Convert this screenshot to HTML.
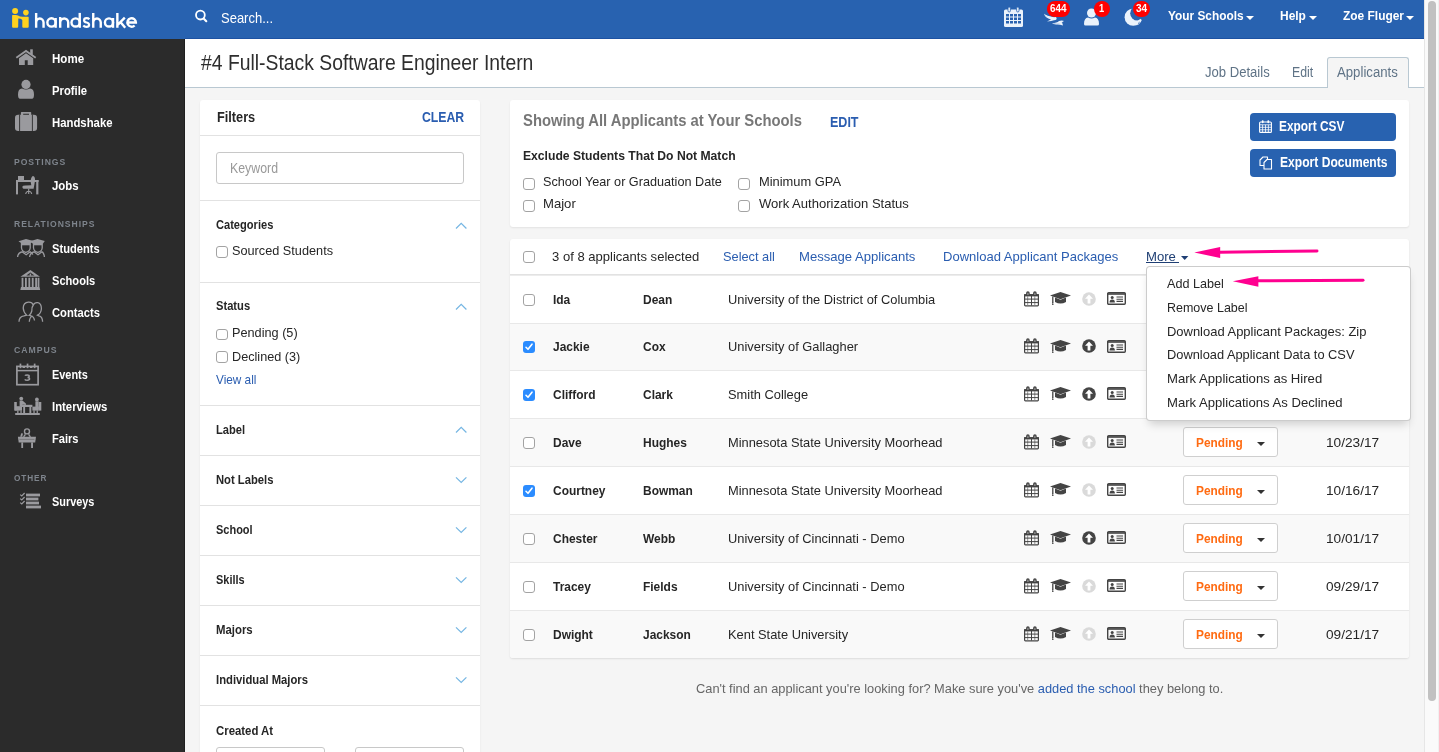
<!DOCTYPE html>
<html><head><meta charset="utf-8"><style>
html,body{margin:0;padding:0;}
body{width:1439px;height:752px;overflow:hidden;background:#f5f5f5;position:relative;font-family:"Liberation Sans",sans-serif;}
.a{position:absolute;}
.t{position:absolute;line-height:1;white-space:nowrap;transform-origin:0 0;}
</style></head><body>
<div class="a" style="left:1424px;top:0px;width:15px;height:752px;background:#fafafa;border-left:1px solid #e6e6e6;border-right:1px solid #f0f0f0;box-sizing:border-box;"></div>
<div class="a" style="left:1428px;top:1px;width:8px;height:700px;background:#c1c1c1;border-radius:4px;"></div>
<div class="a" style="left:185px;top:39px;width:1239px;height:48px;background:#fff;"></div>
<div class="a" style="left:185px;top:87px;width:1239px;height:1px;background:#b9c8d2;"></div>
<div class="a" style="left:0px;top:0px;width:1424px;height:39px;background:#2862b0;"></div>
<div class="a" style="left:185px;top:38px;width:1239px;height:1px;background:#1d52a3;"></div>
<div class="a" style="left:0px;top:39px;width:185px;height:713px;background:#2b2b2b;"></div>
<div class="a" style="left:184px;top:39px;width:1px;height:713px;background:#1f1f1f;"></div>
<svg class="a" style="left:10px;top:6px;" width="22" height="24" viewBox="0 0 22 24"><g fill="#ffd21f">
<circle cx="5.1" cy="4.9" r="3"/><circle cx="15.9" cy="6.6" r="2.8"/>
<path d="M2.1 9.5 Q2.1 9 2.6 9 L6 9 Q8 9.3 10 10.6 L12.8 10.8 L18.2 10.8 L18.7 11.3 L18.7 20.8 Q18.7 21.8 17.7 21.8 L13.3 21.8 Q12.3 21.8 12.3 20.8 L12.3 14 Q10.5 12.3 8.3 12.6 L8.2 20.8 Q8.2 21.8 7.2 21.8 L3.1 21.8 Q2.1 21.8 2.1 20.8 Z"/>
</g></svg>
<svg class="a" style="left:0px;top:0px;" width="140" height="32" viewBox="0 0 140 32"><g fill="none" stroke="#fff" stroke-width="2.4">
<path d="M36.15 12.9 V27.8 M36.15 22.6 A3.7 4.1 0 0 1 43.55 22.6 V27.8"/>
<circle cx="51.5" cy="22.45" r="4.15"/><path d="M55.65 18 V27.8"/>
<path d="M60.2 17.1 V27.8 M60.2 22.6 A4 4.1 0 0 1 68.2 22.6 V27.8"/>
<circle cx="75.6" cy="22.45" r="4.1"/><path d="M79.75 12.9 V27.8"/>
<path d="M89.4 19.3 Q88.4 18.2 86.5 18.2 Q84.1 18.2 84.1 20.2 Q84.1 22.1 86.6 22.5 Q89.1 22.9 89.1 24.9 Q89.1 26.8 86.4 26.8 Q84.4 26.8 83.3 25.6" stroke-width="2.2"/>
<path d="M93.25 12.9 V27.8 M93.25 22.6 A3.75 4.1 0 0 1 100.75 22.6 V27.8"/>
<circle cx="109" cy="22.45" r="4.05"/><path d="M113 18 V27.8"/>
<path d="M117.35 12.9 V27.8 M117.9 24.6 L124.8 17.6 M120.4 22.1 L125.2 27.8"/>
<path d="M127.4 22.45 H135.9 A4.25 4.25 0 1 0 134.6 25.5"/>
</g></svg>
<svg class="a" style="left:194px;top:9px;" width="15" height="15" viewBox="0 0 15 15"><circle cx="6.4" cy="6.1" r="4.4" fill="none" stroke="#fff" stroke-width="1.8"/><path d="M9.6 9.4 L12.3 12.2" stroke="#fff" stroke-width="2.1" stroke-linecap="round"/></svg>
<div class="t " style="left:221.00px;top:10.30px;font-size:15px;color:#fff;transform:scaleX(0.8662);">Search...</div>
<div class="t " style="left:1168.40px;top:8.70px;font-size:13px;color:#fff;font-weight:bold;transform:scaleX(0.9128);">Your Schools</div>
<svg class="a" style="left:1245.5px;top:15.5px;" width="8" height="4" viewBox="0 0 8 4"><path d="M0 0 L8 0 L4.0 4 Z" fill="#fff"/></svg>
<div class="t " style="left:1280.40px;top:8.70px;font-size:13px;color:#fff;font-weight:bold;transform:scaleX(0.9194);">Help</div>
<svg class="a" style="left:1308.7px;top:15.5px;" width="8" height="4" viewBox="0 0 8 4"><path d="M0 0 L8 0 L4.0 4 Z" fill="#fff"/></svg>
<div class="t " style="left:1343.00px;top:8.70px;font-size:13px;color:#fff;font-weight:bold;transform:scaleX(0.9180);">Zoe Fluger</div>
<svg class="a" style="left:1405.6px;top:15.5px;" width="8" height="4" viewBox="0 0 8 4"><path d="M0 0 L8 0 L4.0 4 Z" fill="#fff"/></svg>
<svg class="a" style="left:1004px;top:7px;" width="19" height="20" viewBox="0 0 19 20"><g fill="#eaf2fb">
<rect x="0" y="2.5" width="19" height="17.5" rx="1.5"/>
</g>
<rect x="4" y="0" width="2.4" height="5" rx="1.2" fill="#eaf2fb" stroke="#2862b0" stroke-width="0.8"/>
<rect x="12.6" y="0" width="2.4" height="5" rx="1.2" fill="#eaf2fb" stroke="#2862b0" stroke-width="0.8"/>
<g fill="#2862b0">
<rect x="2" y="7" width="3" height="2.5"/><rect x="6" y="7" width="3" height="2.5"/><rect x="10" y="7" width="3" height="2.5"/><rect x="14" y="7" width="3" height="2.5"/>
<rect x="2" y="10.5" width="3" height="2.5"/><rect x="6" y="10.5" width="3" height="2.5"/><rect x="10" y="10.5" width="3" height="2.5"/><rect x="14" y="10.5" width="3" height="2.5"/>
<rect x="2" y="14" width="3" height="2.5"/><rect x="6" y="14" width="3" height="2.5"/><rect x="10" y="14" width="3" height="2.5"/><rect x="14" y="14" width="3" height="2.5"/>
</g></svg>
<svg class="a" style="left:1043px;top:10px;" width="22" height="16" viewBox="0 0 22 16"><g fill="#eaf2fb">
<path d="M1 4 Q5 9 12 8.5 L10 7 Q4 6 1 4 Z"/>
<path d="M1 3.5 Q2 8 8 9.5 L4 11.5 Q9 11 11 10.3 Q15 10 13 7 L8 7.5 Q3 7 1 3.5Z"/>
<path d="M21 11 Q17 15 9 13 Q14 13 16 11 Q19 10 21 11Z"/>
<path d="M9 13 Q15 14.5 19 12 L20 15.5 Q16 14 13 14.5 Q10 14 9 13Z"/>
</g></svg>
<svg class="a" style="left:1084px;top:8px;" width="15" height="18" viewBox="0 0 15 18"><g fill="#eaf2fb"><circle cx="7.5" cy="5" r="4.5"/><path d="M0 16 Q0 10 4 9.5 Q7.5 11.5 11 9.5 Q15 10 15 16 Q15 17.5 13.5 17.5 L1.5 17.5 Q0 17.5 0 16Z"/></g></svg>
<svg class="a" style="left:1122px;top:6px;" width="22" height="22" viewBox="0 0 22 22"><defs><mask id="mm"><rect width="22" height="22" fill="#fff"/><circle cx="15.6" cy="7.2" r="7.4" fill="#000"/></mask></defs>
<circle cx="11.2" cy="11.2" r="8.6" fill="#eaf2fb" mask="url(#mm)"/>
<path d="M14.5 15.5 L18.6 12.8 L19.6 14.6 Q18 18.2 15.6 19.2 Z" fill="#eaf2fb"/><path d="M16 17.6 L17.6 15.2 L17.2 18 Z" fill="#2862b0"/></svg>
<div class="a" style="left:1046.8px;top:1.2px;width:23px;height:15.6px;background:#ff0000;border-radius:7.8px;"></div>
<div class="t " style="left:1050.20px;top:3.01px;font-size:10.5px;color:#fff;font-weight:bold;transform:scaleX(0.9418);">644</div>
<div class="a" style="left:1094px;top:1.2px;width:16px;height:15.8px;background:#ff0000;border-radius:7.9px;"></div>
<div class="t " style="left:1099.20px;top:3.01px;font-size:10.5px;color:#fff;font-weight:bold;transform:scaleX(0.8904);">1</div>
<div class="a" style="left:1133px;top:1.2px;width:17px;height:15.8px;background:#ff0000;border-radius:7.9px;"></div>
<div class="t " style="left:1135.80px;top:3.01px;font-size:10.5px;color:#fff;font-weight:bold;transform:scaleX(0.9589);">34</div>
<div class="t " style="left:51.90px;top:52.00px;font-size:13px;color:#fff;font-weight:bold;transform:scaleX(0.8887);">Home</div>
<div class="t " style="left:51.90px;top:83.50px;font-size:13px;color:#fff;font-weight:bold;transform:scaleX(0.8676);">Profile</div>
<div class="t " style="left:51.90px;top:115.70px;font-size:13px;color:#fff;font-weight:bold;transform:scaleX(0.8722);">Handshake</div>
<div class="t " style="left:51.90px;top:178.50px;font-size:13px;color:#fff;font-weight:bold;transform:scaleX(0.8799);">Jobs</div>
<div class="t " style="left:51.90px;top:242.00px;font-size:13px;color:#fff;font-weight:bold;transform:scaleX(0.8577);">Students</div>
<div class="t " style="left:51.90px;top:273.50px;font-size:13px;color:#fff;font-weight:bold;transform:scaleX(0.8543);">Schools</div>
<div class="t " style="left:51.90px;top:306.10px;font-size:13px;color:#fff;font-weight:bold;transform:scaleX(0.8612);">Contacts</div>
<div class="t " style="left:51.90px;top:368.00px;font-size:13px;color:#fff;font-weight:bold;transform:scaleX(0.8397);">Events</div>
<div class="t " style="left:51.90px;top:400.10px;font-size:13px;color:#fff;font-weight:bold;transform:scaleX(0.8713);">Interviews</div>
<div class="t " style="left:51.90px;top:432.00px;font-size:13px;color:#fff;font-weight:bold;transform:scaleX(0.8529);">Fairs</div>
<div class="t " style="left:51.90px;top:495.00px;font-size:13px;color:#fff;font-weight:bold;transform:scaleX(0.8381);">Surveys</div>
<div class="t " style="left:14.00px;top:157.78px;font-size:9px;color:#7e848c;font-weight:bold;letter-spacing:1px;transform:scaleX(0.9569);">POSTINGS</div>
<div class="t " style="left:14.00px;top:220.38px;font-size:9px;color:#7e848c;font-weight:bold;letter-spacing:1px;transform:scaleX(0.9533);">RELATIONSHIPS</div>
<div class="t " style="left:14.00px;top:346.38px;font-size:9px;color:#7e848c;font-weight:bold;letter-spacing:1px;transform:scaleX(0.9658);">CAMPUS</div>
<div class="t " style="left:14.00px;top:473.58px;font-size:9px;color:#7e848c;font-weight:bold;letter-spacing:1px;transform:scaleX(0.9127);">OTHER</div>
<div class="t " style="left:200.70px;top:51.72px;font-size:21.6px;color:#2e2e2e;transform:scaleX(0.8962);">#4 Full-Stack Software Engineer Intern</div>
<div class="a" style="left:1326.5px;top:57px;width:82px;height:31px;background:#f5f5f5;border:1px solid #b9c8d2;border-bottom:none;border-radius:3px 3px 0 0;box-sizing:border-box;"></div>
<div class="t " style="left:1204.70px;top:64.55px;font-size:14px;color:#5f7386;transform:scaleX(0.9342);">Job Details</div>
<div class="t " style="left:1291.80px;top:64.55px;font-size:14px;color:#5f7386;transform:scaleX(0.8788);">Edit</div>
<div class="t " style="left:1336.70px;top:65.15px;font-size:14px;color:#5f7386;transform:scaleX(0.9413);">Applicants</div>
<div class="a" style="left:200px;top:100px;width:280px;height:700px;background:#fff;border-radius:3px;box-shadow:0 1px 2px rgba(0,0,0,.08);"></div>
<div class="t " style="left:216.60px;top:109.85px;font-size:14px;color:#262626;font-weight:bold;transform:scaleX(0.9092);">Filters</div>
<div class="t " style="left:422.00px;top:110.15px;font-size:14px;color:#2a5db0;font-weight:bold;transform:scaleX(0.8751);">CLEAR</div>
<div class="a" style="left:200px;top:135px;width:280px;height:1px;background:#e2e2e2;"></div>
<div class="a" style="left:216px;top:152px;width:248px;height:32px;background:#fff;border:1px solid #c8c8c8;border-radius:3px;box-sizing:border-box;"></div>
<div class="t " style="left:229.50px;top:161.05px;font-size:14px;color:#999;transform:scaleX(0.8812);">Keyword</div>
<div class="a" style="left:200px;top:200px;width:280px;height:1px;background:#e2e2e2;"></div>
<div class="t " style="left:216.40px;top:218.84px;font-size:12px;color:#262626;font-weight:bold;transform:scaleX(0.9238);">Categories</div>
<svg class="a" style="left:454.5px;top:221.5px;" width="13" height="8" viewBox="0 0 13 8"><path d="M1 6.5 L6.2 1.3 L11.4 6.5" fill="none" stroke="#75b6e3" stroke-width="1.2"/></svg>
<div class="a" style="left:216.4px;top:246.3px;width:11.5px;height:11.5px;background:#fff;border:1px solid #a3a3a3;border-radius:3px;box-sizing:border-box;"></div>
<div class="t " style="left:231.50px;top:244.16px;font-size:13.4px;color:#262626;transform:scaleX(0.9490);">Sourced Students</div>
<div class="a" style="left:200px;top:282px;width:280px;height:1px;background:#e2e2e2;"></div>
<div class="t " style="left:216.40px;top:300.44px;font-size:12px;color:#262626;font-weight:bold;transform:scaleX(0.9298);">Status</div>
<svg class="a" style="left:454.5px;top:303px;" width="13" height="8" viewBox="0 0 13 8"><path d="M1 6.5 L6.2 1.3 L11.4 6.5" fill="none" stroke="#75b6e3" stroke-width="1.2"/></svg>
<div class="a" style="left:216.4px;top:328.5px;width:11.5px;height:11.5px;background:#fff;border:1px solid #a3a3a3;border-radius:3px;box-sizing:border-box;"></div>
<div class="t " style="left:231.50px;top:326.36px;font-size:13.4px;color:#262626;transform:scaleX(0.9483);">Pending (5)</div>
<div class="a" style="left:216.4px;top:351.2px;width:11.5px;height:11.5px;background:#fff;border:1px solid #a3a3a3;border-radius:3px;box-sizing:border-box;"></div>
<div class="t " style="left:231.50px;top:349.86px;font-size:13.4px;color:#262626;transform:scaleX(0.9454);">Declined (3)</div>
<div class="t " style="left:216.40px;top:373.00px;font-size:13px;color:#2a5db0;transform:scaleX(0.9066);">View all</div>
<div class="a" style="left:200px;top:405px;width:280px;height:1px;background:#e2e2e2;"></div>
<div class="t " style="left:216.40px;top:423.74px;font-size:12px;color:#262626;font-weight:bold;transform:scaleX(0.9285);">Label</div>
<svg class="a" style="left:454.5px;top:425.9px;" width="13" height="8" viewBox="0 0 13 8"><path d="M1 6.5 L6.2 1.3 L11.4 6.5" fill="none" stroke="#75b6e3" stroke-width="1.2"/></svg>
<div class="a" style="left:200px;top:455px;width:280px;height:1px;background:#e2e2e2;"></div>
<div class="t " style="left:216.40px;top:473.64px;font-size:12px;color:#262626;font-weight:bold;transform:scaleX(0.9357);">Not Labels</div>
<svg class="a" style="left:454.5px;top:476.3px;" width="13" height="8" viewBox="0 0 13 8"><path d="M1 1.3 L6.2 6.5 L11.4 1.3" fill="none" stroke="#75b6e3" stroke-width="1.2"/></svg>
<div class="a" style="left:200px;top:505px;width:280px;height:1px;background:#e2e2e2;"></div>
<div class="t " style="left:216.40px;top:523.54px;font-size:12px;color:#262626;font-weight:bold;transform:scaleX(0.9149);">School</div>
<svg class="a" style="left:454.5px;top:526.2px;" width="13" height="8" viewBox="0 0 13 8"><path d="M1 1.3 L6.2 6.5 L11.4 1.3" fill="none" stroke="#75b6e3" stroke-width="1.2"/></svg>
<div class="a" style="left:200px;top:555px;width:280px;height:1px;background:#e2e2e2;"></div>
<div class="t " style="left:216.40px;top:573.54px;font-size:12px;color:#262626;font-weight:bold;transform:scaleX(0.9122);">Skills</div>
<svg class="a" style="left:454.5px;top:576.2px;" width="13" height="8" viewBox="0 0 13 8"><path d="M1 1.3 L6.2 6.5 L11.4 1.3" fill="none" stroke="#75b6e3" stroke-width="1.2"/></svg>
<div class="a" style="left:200px;top:605px;width:280px;height:1px;background:#e2e2e2;"></div>
<div class="t " style="left:216.40px;top:623.54px;font-size:12px;color:#262626;font-weight:bold;transform:scaleX(0.9488);">Majors</div>
<svg class="a" style="left:454.5px;top:626.2px;" width="13" height="8" viewBox="0 0 13 8"><path d="M1 1.3 L6.2 6.5 L11.4 1.3" fill="none" stroke="#75b6e3" stroke-width="1.2"/></svg>
<div class="a" style="left:200px;top:655px;width:280px;height:1px;background:#e2e2e2;"></div>
<div class="t " style="left:216.40px;top:673.54px;font-size:12px;color:#262626;font-weight:bold;transform:scaleX(0.9386);">Individual Majors</div>
<svg class="a" style="left:454.5px;top:676.2px;" width="13" height="8" viewBox="0 0 13 8"><path d="M1 1.3 L6.2 6.5 L11.4 1.3" fill="none" stroke="#75b6e3" stroke-width="1.2"/></svg>
<div class="a" style="left:200px;top:705px;width:280px;height:1px;background:#e2e2e2;"></div>
<div class="t " style="left:216.40px;top:725.24px;font-size:12px;color:#262626;font-weight:bold;transform:scaleX(0.9479);">Created At</div>
<div class="a" style="left:216px;top:747px;width:109px;height:20px;background:#fff;border:1px solid #c8c8c8;border-radius:3px;box-sizing:border-box;"></div>
<div class="a" style="left:355px;top:747px;width:109px;height:20px;background:#fff;border:1px solid #c8c8c8;border-radius:3px;box-sizing:border-box;"></div>
<div class="a" style="left:510px;top:100px;width:899px;height:127px;background:#fff;border-radius:3px;box-shadow:0 1px 2px rgba(0,0,0,.08);"></div>
<div class="t " style="left:523.40px;top:112.86px;font-size:16px;color:#777;font-weight:bold;transform:scaleX(0.9255);">Showing All Applicants at Your Schools</div>
<div class="t " style="left:830.00px;top:115.15px;font-size:14px;color:#2a5db0;font-weight:bold;transform:scaleX(0.8937);">EDIT</div>
<div class="t " style="left:523.40px;top:150.24px;font-size:12px;color:#262626;font-weight:bold;transform:scaleX(1.0123);">Exclude Students That Do Not Match</div>
<div class="a" style="left:523.3px;top:178.2px;width:11.8px;height:11.8px;background:#fff;border:1px solid #a3a3a3;border-radius:3px;box-sizing:border-box;"></div>
<div class="t " style="left:543.30px;top:174.66px;font-size:13.4px;color:#262626;transform:scaleX(0.9455);">School Year or Graduation Date</div>
<div class="a" style="left:523.3px;top:200.4px;width:11.8px;height:11.8px;background:#fff;border:1px solid #a3a3a3;border-radius:3px;box-sizing:border-box;"></div>
<div class="t " style="left:543.30px;top:197.36px;font-size:13.4px;color:#262626;transform:scaleX(0.9789);">Major</div>
<div class="a" style="left:738.2px;top:178.2px;width:11.8px;height:11.8px;background:#fff;border:1px solid #a3a3a3;border-radius:3px;box-sizing:border-box;"></div>
<div class="t " style="left:759.00px;top:174.66px;font-size:13.4px;color:#262626;transform:scaleX(0.9616);">Minimum GPA</div>
<div class="a" style="left:738.2px;top:200.4px;width:11.8px;height:11.8px;background:#fff;border:1px solid #a3a3a3;border-radius:3px;box-sizing:border-box;"></div>
<div class="t " style="left:759.00px;top:197.36px;font-size:13.4px;color:#262626;transform:scaleX(0.9744);">Work Authorization Status</div>
<div class="a" style="left:1250px;top:113px;width:146px;height:28px;background:#2862b0;border-radius:4px;"></div>
<div class="a" style="left:1250px;top:149px;width:146px;height:28px;background:#2862b0;border-radius:4px;"></div>
<div class="t " style="left:1278.70px;top:119.45px;font-size:14px;color:#fff;font-weight:bold;transform:scaleX(0.8479);">Export CSV</div>
<div class="t " style="left:1279.50px;top:155.15px;font-size:14px;color:#fff;font-weight:bold;transform:scaleX(0.8637);">Export Documents</div>
<svg class="a" style="left:1259px;top:120px;" width="13" height="13" viewBox="0 0 13 13"><rect x="0.6" y="2" width="11.8" height="10.4" rx="1" fill="none" stroke="#fff" stroke-width="1.1"/>
<path d="M0.6 4.8 H12.4 M0.6 7.3 H12.4 M0.6 9.8 H12.4 M3.6 4.8 V12.4 M6.5 4.8 V12.4 M9.4 4.8 V12.4" stroke="#fff" stroke-width="0.8"/>
<rect x="2.8" y="0.2" width="1.8" height="3" rx=".8" fill="#fff"/><rect x="8.4" y="0.2" width="1.8" height="3" rx=".8" fill="#fff"/></svg>
<svg class="a" style="left:1259px;top:156px;" width="14" height="14" viewBox="0 0 14 14"><path d="M1 4 L4 1 H8.5 V9.5 H1 Z" fill="none" stroke="#fff" stroke-width="1.1" stroke-linejoin="round"/>
<path d="M5 6.5 L8 3.5 H12.5 V13 H5 Z" fill="#2862b0" stroke="#fff" stroke-width="1.1" stroke-linejoin="round"/></svg>
<div class="a" style="left:510px;top:239px;width:899px;height:419px;background:#fff;border-radius:3px;box-shadow:0 1px 2px rgba(0,0,0,.1);"></div>
<div class="a" style="left:523px;top:251px;width:12px;height:12px;background:#fff;border:1px solid #a3a3a3;border-radius:3px;box-sizing:border-box;"></div>
<div class="t " style="left:551.60px;top:249.66px;font-size:13.4px;color:#262626;transform:scaleX(0.9741);">3 of 8 applicants selected</div>
<div class="t " style="left:722.50px;top:250.00px;font-size:13px;color:#2a5db0;transform:scaleX(0.9839);">Select all</div>
<div class="t " style="left:799.00px;top:250.00px;font-size:13px;color:#2a5db0;transform:scaleX(1.0067);">Message Applicants</div>
<div class="t " style="left:943.30px;top:250.00px;font-size:13px;color:#2a5db0;transform:scaleX(1.0017);">Download Applicant Packages</div>
<div class="t " style="left:1146.10px;top:249.80px;font-size:13px;color:#1f3f74;transform:scaleX(1.0095);">More</div>
<div class="a" style="left:1146px;top:262px;width:33px;height:1px;background:#1f3f74;"></div>
<svg class="a" style="left:1181.4px;top:256px;" width="7.4" height="4" viewBox="0 0 7.4 4"><path d="M0 0 L7.4 0 L3.7 4 Z" fill="#1f3f74"/></svg>
<div class="a" style="left:510px;top:274px;width:899px;height:1px;background:#e2e2e2;"></div>
<div class="a" style="left:510px;top:275px;width:899px;height:1px;background:#ececec;"></div>
<div class="a" style="left:510px;top:276px;width:899px;height:47px;background:#fff;"></div>
<div class="a" style="left:510px;top:323px;width:899px;height:1px;background:#e8e8e8;"></div>
<div class="a" style="left:523px;top:293.7px;width:12px;height:12px;background:#fff;border:1px solid #a3a3a3;border-radius:3px;box-sizing:border-box;"></div>
<div class="t " style="left:553.00px;top:292.73px;font-size:13.2px;color:#262626;font-weight:bold;transform:scaleX(0.9061);">Ida</div>
<div class="t " style="left:642.60px;top:292.73px;font-size:13.2px;color:#262626;font-weight:bold;transform:scaleX(0.9061);">Dean</div>
<div class="t " style="left:728.20px;top:292.56px;font-size:13.4px;color:#262626;transform:scaleX(0.9604);">University of the District of Columbia</div>
<svg class="a" style="left:1024px;top:290.5px;" width="15" height="16" viewBox="0 0 15 16"><rect x="0.6" y="3.9" width="13.8" height="10.9" rx="0.8" fill="none" stroke="#444" stroke-width="1.2"/>
<rect x="0" y="3.2" width="15" height="2.2" fill="#444"/>
<rect x="2.1" y="0.3" width="3.6" height="4.5" rx="1.8" fill="#444"/><rect x="9.1" y="0.3" width="3.6" height="4.5" rx="1.8" fill="#444"/>
<rect x="3.3" y="1.8" width="1.2" height="2.2" fill="#999"/><rect x="10.3" y="1.8" width="1.2" height="2.2" fill="#999"/>
<path d="M3.7 5 V14.5 M10.8 5 V14.5" stroke="#888" stroke-width="0.9"/>
<path d="M7.5 5 V14.5 M0.6 8.1 H14.4 M0.6 11.6 H14.4" stroke="#444" stroke-width="1"/></svg>
<svg class="a" style="left:1050px;top:292.0px;" width="21" height="13" viewBox="0 0 21 13"><path d="M0 3.6 L10.5 0 L21 3.6 L10.5 7.2 Z" fill="#444"/>
<path d="M5 5.6 V10 Q10.5 13 16 10 V5.6 L10.5 7.8 Z" fill="#444"/>
<path d="M2.8 4.4 V11" stroke="#444" stroke-width="1.3"/><path d="M2 13 L2.8 9.5 L3.6 13Z" fill="#444"/></svg>
<svg class="a" style="left:1081.8px;top:291.5px;" width="14" height="14" viewBox="0 0 14 14"><circle cx="7" cy="7" r="6.8" fill="#dadada"/><path d="M7 2.6 L11 6.8 H8.4 V11.4 H5.6 V6.8 H3 Z" fill="#fff"/></svg>
<svg class="a" style="left:1106.5px;top:292.0px;" width="19" height="13" viewBox="0 0 19 13"><rect x="0.7" y="0.7" width="17.6" height="11.6" rx="1" fill="none" stroke="#444" stroke-width="1.4"/>
<path d="M0.7 2 H18.3" stroke="#444" stroke-width="1.6"/>
<circle cx="5.2" cy="5.6" r="1.5" fill="#444"/><path d="M2.5 10.4 Q2.5 7.4 5.2 7.4 Q7.9 7.4 7.9 10.4Z" fill="#444"/>
<path d="M9.5 5 H16 M9.5 7.2 H16 M9.5 9.4 H16" stroke="#444" stroke-width="1.1"/></svg>
<div class="a" style="left:510px;top:324px;width:899px;height:46px;background:#f9f9f9;"></div>
<div class="a" style="left:510px;top:370px;width:899px;height:1px;background:#e8e8e8;"></div>
<div class="a" style="left:523px;top:341.2px;width:12px;height:12px;background:#2b8cff;border-radius:3px;"></div>
<svg class="a" style="left:523px;top:341.2px;" width="12" height="12" viewBox="0 0 12 12"><path d="M3 6.3 L5 8.3 L9 3.2" fill="none" stroke="#fff" stroke-width="1.6" stroke-linecap="round" stroke-linejoin="round"/></svg>
<div class="t " style="left:553.00px;top:340.23px;font-size:13.2px;color:#262626;font-weight:bold;transform:scaleX(0.9061);">Jackie</div>
<div class="t " style="left:642.60px;top:340.23px;font-size:13.2px;color:#262626;font-weight:bold;transform:scaleX(0.9061);">Cox</div>
<div class="t " style="left:728.20px;top:340.06px;font-size:13.4px;color:#262626;transform:scaleX(0.9604);">University of Gallagher</div>
<svg class="a" style="left:1024px;top:338.0px;" width="15" height="16" viewBox="0 0 15 16"><rect x="0.6" y="3.9" width="13.8" height="10.9" rx="0.8" fill="none" stroke="#444" stroke-width="1.2"/>
<rect x="0" y="3.2" width="15" height="2.2" fill="#444"/>
<rect x="2.1" y="0.3" width="3.6" height="4.5" rx="1.8" fill="#444"/><rect x="9.1" y="0.3" width="3.6" height="4.5" rx="1.8" fill="#444"/>
<rect x="3.3" y="1.8" width="1.2" height="2.2" fill="#999"/><rect x="10.3" y="1.8" width="1.2" height="2.2" fill="#999"/>
<path d="M3.7 5 V14.5 M10.8 5 V14.5" stroke="#888" stroke-width="0.9"/>
<path d="M7.5 5 V14.5 M0.6 8.1 H14.4 M0.6 11.6 H14.4" stroke="#444" stroke-width="1"/></svg>
<svg class="a" style="left:1050px;top:339.5px;" width="21" height="13" viewBox="0 0 21 13"><path d="M0 3.6 L10.5 0 L21 3.6 L10.5 7.2 Z" fill="#444"/>
<path d="M5 5.6 V10 Q10.5 13 16 10 V5.6 L10.5 7.8 Z" fill="#444"/>
<path d="M2.8 4.4 V11" stroke="#444" stroke-width="1.3"/><path d="M2 13 L2.8 9.5 L3.6 13Z" fill="#444"/></svg>
<svg class="a" style="left:1081.8px;top:339.0px;" width="14" height="14" viewBox="0 0 14 14"><circle cx="7" cy="7" r="6.8" fill="#444"/><path d="M7 2.6 L11 6.8 H8.4 V11.4 H5.6 V6.8 H3 Z" fill="#fff"/></svg>
<svg class="a" style="left:1106.5px;top:339.5px;" width="19" height="13" viewBox="0 0 19 13"><rect x="0.7" y="0.7" width="17.6" height="11.6" rx="1" fill="none" stroke="#444" stroke-width="1.4"/>
<path d="M0.7 2 H18.3" stroke="#444" stroke-width="1.6"/>
<circle cx="5.2" cy="5.6" r="1.5" fill="#444"/><path d="M2.5 10.4 Q2.5 7.4 5.2 7.4 Q7.9 7.4 7.9 10.4Z" fill="#444"/>
<path d="M9.5 5 H16 M9.5 7.2 H16 M9.5 9.4 H16" stroke="#444" stroke-width="1.1"/></svg>
<div class="a" style="left:510px;top:371px;width:899px;height:47px;background:#fff;"></div>
<div class="a" style="left:510px;top:418px;width:899px;height:1px;background:#e8e8e8;"></div>
<div class="a" style="left:523px;top:388.7px;width:12px;height:12px;background:#2b8cff;border-radius:3px;"></div>
<svg class="a" style="left:523px;top:388.7px;" width="12" height="12" viewBox="0 0 12 12"><path d="M3 6.3 L5 8.3 L9 3.2" fill="none" stroke="#fff" stroke-width="1.6" stroke-linecap="round" stroke-linejoin="round"/></svg>
<div class="t " style="left:553.00px;top:387.73px;font-size:13.2px;color:#262626;font-weight:bold;transform:scaleX(0.9061);">Clifford</div>
<div class="t " style="left:642.60px;top:387.73px;font-size:13.2px;color:#262626;font-weight:bold;transform:scaleX(0.9061);">Clark</div>
<div class="t " style="left:728.20px;top:387.56px;font-size:13.4px;color:#262626;transform:scaleX(0.9604);">Smith College</div>
<svg class="a" style="left:1024px;top:385.5px;" width="15" height="16" viewBox="0 0 15 16"><rect x="0.6" y="3.9" width="13.8" height="10.9" rx="0.8" fill="none" stroke="#444" stroke-width="1.2"/>
<rect x="0" y="3.2" width="15" height="2.2" fill="#444"/>
<rect x="2.1" y="0.3" width="3.6" height="4.5" rx="1.8" fill="#444"/><rect x="9.1" y="0.3" width="3.6" height="4.5" rx="1.8" fill="#444"/>
<rect x="3.3" y="1.8" width="1.2" height="2.2" fill="#999"/><rect x="10.3" y="1.8" width="1.2" height="2.2" fill="#999"/>
<path d="M3.7 5 V14.5 M10.8 5 V14.5" stroke="#888" stroke-width="0.9"/>
<path d="M7.5 5 V14.5 M0.6 8.1 H14.4 M0.6 11.6 H14.4" stroke="#444" stroke-width="1"/></svg>
<svg class="a" style="left:1050px;top:387.0px;" width="21" height="13" viewBox="0 0 21 13"><path d="M0 3.6 L10.5 0 L21 3.6 L10.5 7.2 Z" fill="#444"/>
<path d="M5 5.6 V10 Q10.5 13 16 10 V5.6 L10.5 7.8 Z" fill="#444"/>
<path d="M2.8 4.4 V11" stroke="#444" stroke-width="1.3"/><path d="M2 13 L2.8 9.5 L3.6 13Z" fill="#444"/></svg>
<svg class="a" style="left:1081.8px;top:386.5px;" width="14" height="14" viewBox="0 0 14 14"><circle cx="7" cy="7" r="6.8" fill="#444"/><path d="M7 2.6 L11 6.8 H8.4 V11.4 H5.6 V6.8 H3 Z" fill="#fff"/></svg>
<svg class="a" style="left:1106.5px;top:387.0px;" width="19" height="13" viewBox="0 0 19 13"><rect x="0.7" y="0.7" width="17.6" height="11.6" rx="1" fill="none" stroke="#444" stroke-width="1.4"/>
<path d="M0.7 2 H18.3" stroke="#444" stroke-width="1.6"/>
<circle cx="5.2" cy="5.6" r="1.5" fill="#444"/><path d="M2.5 10.4 Q2.5 7.4 5.2 7.4 Q7.9 7.4 7.9 10.4Z" fill="#444"/>
<path d="M9.5 5 H16 M9.5 7.2 H16 M9.5 9.4 H16" stroke="#444" stroke-width="1.1"/></svg>
<div class="a" style="left:510px;top:419px;width:899px;height:47px;background:#f9f9f9;"></div>
<div class="a" style="left:510px;top:466px;width:899px;height:1px;background:#e8e8e8;"></div>
<div class="a" style="left:523px;top:436.7px;width:12px;height:12px;background:#fff;border:1px solid #a3a3a3;border-radius:3px;box-sizing:border-box;"></div>
<div class="t " style="left:553.00px;top:435.73px;font-size:13.2px;color:#262626;font-weight:bold;transform:scaleX(0.9061);">Dave</div>
<div class="t " style="left:642.60px;top:435.73px;font-size:13.2px;color:#262626;font-weight:bold;transform:scaleX(0.9061);">Hughes</div>
<div class="t " style="left:728.20px;top:435.56px;font-size:13.4px;color:#262626;transform:scaleX(0.9604);">Minnesota State University Moorhead</div>
<svg class="a" style="left:1024px;top:433.5px;" width="15" height="16" viewBox="0 0 15 16"><rect x="0.6" y="3.9" width="13.8" height="10.9" rx="0.8" fill="none" stroke="#444" stroke-width="1.2"/>
<rect x="0" y="3.2" width="15" height="2.2" fill="#444"/>
<rect x="2.1" y="0.3" width="3.6" height="4.5" rx="1.8" fill="#444"/><rect x="9.1" y="0.3" width="3.6" height="4.5" rx="1.8" fill="#444"/>
<rect x="3.3" y="1.8" width="1.2" height="2.2" fill="#999"/><rect x="10.3" y="1.8" width="1.2" height="2.2" fill="#999"/>
<path d="M3.7 5 V14.5 M10.8 5 V14.5" stroke="#888" stroke-width="0.9"/>
<path d="M7.5 5 V14.5 M0.6 8.1 H14.4 M0.6 11.6 H14.4" stroke="#444" stroke-width="1"/></svg>
<svg class="a" style="left:1050px;top:435.0px;" width="21" height="13" viewBox="0 0 21 13"><path d="M0 3.6 L10.5 0 L21 3.6 L10.5 7.2 Z" fill="#444"/>
<path d="M5 5.6 V10 Q10.5 13 16 10 V5.6 L10.5 7.8 Z" fill="#444"/>
<path d="M2.8 4.4 V11" stroke="#444" stroke-width="1.3"/><path d="M2 13 L2.8 9.5 L3.6 13Z" fill="#444"/></svg>
<svg class="a" style="left:1081.8px;top:434.5px;" width="14" height="14" viewBox="0 0 14 14"><circle cx="7" cy="7" r="6.8" fill="#dadada"/><path d="M7 2.6 L11 6.8 H8.4 V11.4 H5.6 V6.8 H3 Z" fill="#fff"/></svg>
<svg class="a" style="left:1106.5px;top:435.0px;" width="19" height="13" viewBox="0 0 19 13"><rect x="0.7" y="0.7" width="17.6" height="11.6" rx="1" fill="none" stroke="#444" stroke-width="1.4"/>
<path d="M0.7 2 H18.3" stroke="#444" stroke-width="1.6"/>
<circle cx="5.2" cy="5.6" r="1.5" fill="#444"/><path d="M2.5 10.4 Q2.5 7.4 5.2 7.4 Q7.9 7.4 7.9 10.4Z" fill="#444"/>
<path d="M9.5 5 H16 M9.5 7.2 H16 M9.5 9.4 H16" stroke="#444" stroke-width="1.1"/></svg>
<div class="a" style="left:1183px;top:427.4px;width:94.5px;height:29.2px;background:#fff;border:1px solid #cfcfcf;border-radius:3px;box-sizing:border-box;"></div>
<div class="t " style="left:1196.40px;top:435.77px;font-size:13.5px;color:#ff6b12;font-weight:bold;transform:scaleX(0.8789);">Pending</div>
<svg class="a" style="left:1257px;top:441.6px;" width="8" height="4" viewBox="0 0 8 4"><path d="M0 0 L8 0 L4.0 4 Z" fill="#333"/></svg>
<div class="t " style="left:1325.80px;top:435.86px;font-size:13.4px;color:#262626;transform:scaleX(1.0199);">10/23/17</div>
<div class="a" style="left:510px;top:467px;width:899px;height:47px;background:#fff;"></div>
<div class="a" style="left:510px;top:514px;width:899px;height:1px;background:#e8e8e8;"></div>
<div class="a" style="left:523px;top:484.7px;width:12px;height:12px;background:#2b8cff;border-radius:3px;"></div>
<svg class="a" style="left:523px;top:484.7px;" width="12" height="12" viewBox="0 0 12 12"><path d="M3 6.3 L5 8.3 L9 3.2" fill="none" stroke="#fff" stroke-width="1.6" stroke-linecap="round" stroke-linejoin="round"/></svg>
<div class="t " style="left:553.00px;top:483.73px;font-size:13.2px;color:#262626;font-weight:bold;transform:scaleX(0.9061);">Courtney</div>
<div class="t " style="left:642.60px;top:483.73px;font-size:13.2px;color:#262626;font-weight:bold;transform:scaleX(0.9061);">Bowman</div>
<div class="t " style="left:728.20px;top:483.56px;font-size:13.4px;color:#262626;transform:scaleX(0.9604);">Minnesota State University Moorhead</div>
<svg class="a" style="left:1024px;top:481.5px;" width="15" height="16" viewBox="0 0 15 16"><rect x="0.6" y="3.9" width="13.8" height="10.9" rx="0.8" fill="none" stroke="#444" stroke-width="1.2"/>
<rect x="0" y="3.2" width="15" height="2.2" fill="#444"/>
<rect x="2.1" y="0.3" width="3.6" height="4.5" rx="1.8" fill="#444"/><rect x="9.1" y="0.3" width="3.6" height="4.5" rx="1.8" fill="#444"/>
<rect x="3.3" y="1.8" width="1.2" height="2.2" fill="#999"/><rect x="10.3" y="1.8" width="1.2" height="2.2" fill="#999"/>
<path d="M3.7 5 V14.5 M10.8 5 V14.5" stroke="#888" stroke-width="0.9"/>
<path d="M7.5 5 V14.5 M0.6 8.1 H14.4 M0.6 11.6 H14.4" stroke="#444" stroke-width="1"/></svg>
<svg class="a" style="left:1050px;top:483.0px;" width="21" height="13" viewBox="0 0 21 13"><path d="M0 3.6 L10.5 0 L21 3.6 L10.5 7.2 Z" fill="#444"/>
<path d="M5 5.6 V10 Q10.5 13 16 10 V5.6 L10.5 7.8 Z" fill="#444"/>
<path d="M2.8 4.4 V11" stroke="#444" stroke-width="1.3"/><path d="M2 13 L2.8 9.5 L3.6 13Z" fill="#444"/></svg>
<svg class="a" style="left:1081.8px;top:482.5px;" width="14" height="14" viewBox="0 0 14 14"><circle cx="7" cy="7" r="6.8" fill="#dadada"/><path d="M7 2.6 L11 6.8 H8.4 V11.4 H5.6 V6.8 H3 Z" fill="#fff"/></svg>
<svg class="a" style="left:1106.5px;top:483.0px;" width="19" height="13" viewBox="0 0 19 13"><rect x="0.7" y="0.7" width="17.6" height="11.6" rx="1" fill="none" stroke="#444" stroke-width="1.4"/>
<path d="M0.7 2 H18.3" stroke="#444" stroke-width="1.6"/>
<circle cx="5.2" cy="5.6" r="1.5" fill="#444"/><path d="M2.5 10.4 Q2.5 7.4 5.2 7.4 Q7.9 7.4 7.9 10.4Z" fill="#444"/>
<path d="M9.5 5 H16 M9.5 7.2 H16 M9.5 9.4 H16" stroke="#444" stroke-width="1.1"/></svg>
<div class="a" style="left:1183px;top:475.4px;width:94.5px;height:29.2px;background:#fff;border:1px solid #cfcfcf;border-radius:3px;box-sizing:border-box;"></div>
<div class="t " style="left:1196.40px;top:483.77px;font-size:13.5px;color:#ff6b12;font-weight:bold;transform:scaleX(0.8789);">Pending</div>
<svg class="a" style="left:1257px;top:489.6px;" width="8" height="4" viewBox="0 0 8 4"><path d="M0 0 L8 0 L4.0 4 Z" fill="#333"/></svg>
<div class="t " style="left:1325.80px;top:483.86px;font-size:13.4px;color:#262626;transform:scaleX(1.0199);">10/16/17</div>
<div class="a" style="left:510px;top:515px;width:899px;height:47px;background:#f9f9f9;"></div>
<div class="a" style="left:510px;top:562px;width:899px;height:1px;background:#e8e8e8;"></div>
<div class="a" style="left:523px;top:532.7px;width:12px;height:12px;background:#fff;border:1px solid #a3a3a3;border-radius:3px;box-sizing:border-box;"></div>
<div class="t " style="left:553.00px;top:531.73px;font-size:13.2px;color:#262626;font-weight:bold;transform:scaleX(0.9061);">Chester</div>
<div class="t " style="left:642.60px;top:531.73px;font-size:13.2px;color:#262626;font-weight:bold;transform:scaleX(0.9061);">Webb</div>
<div class="t " style="left:728.20px;top:531.56px;font-size:13.4px;color:#262626;transform:scaleX(0.9604);">University of Cincinnati - Demo</div>
<svg class="a" style="left:1024px;top:529.5px;" width="15" height="16" viewBox="0 0 15 16"><rect x="0.6" y="3.9" width="13.8" height="10.9" rx="0.8" fill="none" stroke="#444" stroke-width="1.2"/>
<rect x="0" y="3.2" width="15" height="2.2" fill="#444"/>
<rect x="2.1" y="0.3" width="3.6" height="4.5" rx="1.8" fill="#444"/><rect x="9.1" y="0.3" width="3.6" height="4.5" rx="1.8" fill="#444"/>
<rect x="3.3" y="1.8" width="1.2" height="2.2" fill="#999"/><rect x="10.3" y="1.8" width="1.2" height="2.2" fill="#999"/>
<path d="M3.7 5 V14.5 M10.8 5 V14.5" stroke="#888" stroke-width="0.9"/>
<path d="M7.5 5 V14.5 M0.6 8.1 H14.4 M0.6 11.6 H14.4" stroke="#444" stroke-width="1"/></svg>
<svg class="a" style="left:1050px;top:531.0px;" width="21" height="13" viewBox="0 0 21 13"><path d="M0 3.6 L10.5 0 L21 3.6 L10.5 7.2 Z" fill="#444"/>
<path d="M5 5.6 V10 Q10.5 13 16 10 V5.6 L10.5 7.8 Z" fill="#444"/>
<path d="M2.8 4.4 V11" stroke="#444" stroke-width="1.3"/><path d="M2 13 L2.8 9.5 L3.6 13Z" fill="#444"/></svg>
<svg class="a" style="left:1081.8px;top:530.5px;" width="14" height="14" viewBox="0 0 14 14"><circle cx="7" cy="7" r="6.8" fill="#444"/><path d="M7 2.6 L11 6.8 H8.4 V11.4 H5.6 V6.8 H3 Z" fill="#fff"/></svg>
<svg class="a" style="left:1106.5px;top:531.0px;" width="19" height="13" viewBox="0 0 19 13"><rect x="0.7" y="0.7" width="17.6" height="11.6" rx="1" fill="none" stroke="#444" stroke-width="1.4"/>
<path d="M0.7 2 H18.3" stroke="#444" stroke-width="1.6"/>
<circle cx="5.2" cy="5.6" r="1.5" fill="#444"/><path d="M2.5 10.4 Q2.5 7.4 5.2 7.4 Q7.9 7.4 7.9 10.4Z" fill="#444"/>
<path d="M9.5 5 H16 M9.5 7.2 H16 M9.5 9.4 H16" stroke="#444" stroke-width="1.1"/></svg>
<div class="a" style="left:1183px;top:523.4px;width:94.5px;height:29.2px;background:#fff;border:1px solid #cfcfcf;border-radius:3px;box-sizing:border-box;"></div>
<div class="t " style="left:1196.40px;top:531.77px;font-size:13.5px;color:#ff6b12;font-weight:bold;transform:scaleX(0.8789);">Pending</div>
<svg class="a" style="left:1257px;top:537.6px;" width="8" height="4" viewBox="0 0 8 4"><path d="M0 0 L8 0 L4.0 4 Z" fill="#333"/></svg>
<div class="t " style="left:1325.80px;top:531.86px;font-size:13.4px;color:#262626;transform:scaleX(1.0199);">10/01/17</div>
<div class="a" style="left:510px;top:563px;width:899px;height:47px;background:#fff;"></div>
<div class="a" style="left:510px;top:610px;width:899px;height:1px;background:#e8e8e8;"></div>
<div class="a" style="left:523px;top:580.7px;width:12px;height:12px;background:#fff;border:1px solid #a3a3a3;border-radius:3px;box-sizing:border-box;"></div>
<div class="t " style="left:553.00px;top:579.73px;font-size:13.2px;color:#262626;font-weight:bold;transform:scaleX(0.9061);">Tracey</div>
<div class="t " style="left:642.60px;top:579.73px;font-size:13.2px;color:#262626;font-weight:bold;transform:scaleX(0.9061);">Fields</div>
<div class="t " style="left:728.20px;top:579.56px;font-size:13.4px;color:#262626;transform:scaleX(0.9604);">University of Cincinnati - Demo</div>
<svg class="a" style="left:1024px;top:577.5px;" width="15" height="16" viewBox="0 0 15 16"><rect x="0.6" y="3.9" width="13.8" height="10.9" rx="0.8" fill="none" stroke="#444" stroke-width="1.2"/>
<rect x="0" y="3.2" width="15" height="2.2" fill="#444"/>
<rect x="2.1" y="0.3" width="3.6" height="4.5" rx="1.8" fill="#444"/><rect x="9.1" y="0.3" width="3.6" height="4.5" rx="1.8" fill="#444"/>
<rect x="3.3" y="1.8" width="1.2" height="2.2" fill="#999"/><rect x="10.3" y="1.8" width="1.2" height="2.2" fill="#999"/>
<path d="M3.7 5 V14.5 M10.8 5 V14.5" stroke="#888" stroke-width="0.9"/>
<path d="M7.5 5 V14.5 M0.6 8.1 H14.4 M0.6 11.6 H14.4" stroke="#444" stroke-width="1"/></svg>
<svg class="a" style="left:1050px;top:579.0px;" width="21" height="13" viewBox="0 0 21 13"><path d="M0 3.6 L10.5 0 L21 3.6 L10.5 7.2 Z" fill="#444"/>
<path d="M5 5.6 V10 Q10.5 13 16 10 V5.6 L10.5 7.8 Z" fill="#444"/>
<path d="M2.8 4.4 V11" stroke="#444" stroke-width="1.3"/><path d="M2 13 L2.8 9.5 L3.6 13Z" fill="#444"/></svg>
<svg class="a" style="left:1081.8px;top:578.5px;" width="14" height="14" viewBox="0 0 14 14"><circle cx="7" cy="7" r="6.8" fill="#dadada"/><path d="M7 2.6 L11 6.8 H8.4 V11.4 H5.6 V6.8 H3 Z" fill="#fff"/></svg>
<svg class="a" style="left:1106.5px;top:579.0px;" width="19" height="13" viewBox="0 0 19 13"><rect x="0.7" y="0.7" width="17.6" height="11.6" rx="1" fill="none" stroke="#444" stroke-width="1.4"/>
<path d="M0.7 2 H18.3" stroke="#444" stroke-width="1.6"/>
<circle cx="5.2" cy="5.6" r="1.5" fill="#444"/><path d="M2.5 10.4 Q2.5 7.4 5.2 7.4 Q7.9 7.4 7.9 10.4Z" fill="#444"/>
<path d="M9.5 5 H16 M9.5 7.2 H16 M9.5 9.4 H16" stroke="#444" stroke-width="1.1"/></svg>
<div class="a" style="left:1183px;top:571.4px;width:94.5px;height:29.2px;background:#fff;border:1px solid #cfcfcf;border-radius:3px;box-sizing:border-box;"></div>
<div class="t " style="left:1196.40px;top:579.77px;font-size:13.5px;color:#ff6b12;font-weight:bold;transform:scaleX(0.8789);">Pending</div>
<svg class="a" style="left:1257px;top:585.6px;" width="8" height="4" viewBox="0 0 8 4"><path d="M0 0 L8 0 L4.0 4 Z" fill="#333"/></svg>
<div class="t " style="left:1325.80px;top:579.86px;font-size:13.4px;color:#262626;transform:scaleX(1.0199);">09/29/17</div>
<div class="a" style="left:510px;top:611px;width:899px;height:47px;background:#f9f9f9;border-radius:0 0 3px 3px;"></div>
<div class="a" style="left:523px;top:628.7px;width:12px;height:12px;background:#fff;border:1px solid #a3a3a3;border-radius:3px;box-sizing:border-box;"></div>
<div class="t " style="left:553.00px;top:627.73px;font-size:13.2px;color:#262626;font-weight:bold;transform:scaleX(0.9061);">Dwight</div>
<div class="t " style="left:642.60px;top:627.73px;font-size:13.2px;color:#262626;font-weight:bold;transform:scaleX(0.9061);">Jackson</div>
<div class="t " style="left:728.20px;top:627.56px;font-size:13.4px;color:#262626;transform:scaleX(0.9604);">Kent State University</div>
<svg class="a" style="left:1024px;top:625.5px;" width="15" height="16" viewBox="0 0 15 16"><rect x="0.6" y="3.9" width="13.8" height="10.9" rx="0.8" fill="none" stroke="#444" stroke-width="1.2"/>
<rect x="0" y="3.2" width="15" height="2.2" fill="#444"/>
<rect x="2.1" y="0.3" width="3.6" height="4.5" rx="1.8" fill="#444"/><rect x="9.1" y="0.3" width="3.6" height="4.5" rx="1.8" fill="#444"/>
<rect x="3.3" y="1.8" width="1.2" height="2.2" fill="#999"/><rect x="10.3" y="1.8" width="1.2" height="2.2" fill="#999"/>
<path d="M3.7 5 V14.5 M10.8 5 V14.5" stroke="#888" stroke-width="0.9"/>
<path d="M7.5 5 V14.5 M0.6 8.1 H14.4 M0.6 11.6 H14.4" stroke="#444" stroke-width="1"/></svg>
<svg class="a" style="left:1050px;top:627.0px;" width="21" height="13" viewBox="0 0 21 13"><path d="M0 3.6 L10.5 0 L21 3.6 L10.5 7.2 Z" fill="#444"/>
<path d="M5 5.6 V10 Q10.5 13 16 10 V5.6 L10.5 7.8 Z" fill="#444"/>
<path d="M2.8 4.4 V11" stroke="#444" stroke-width="1.3"/><path d="M2 13 L2.8 9.5 L3.6 13Z" fill="#444"/></svg>
<svg class="a" style="left:1081.8px;top:626.5px;" width="14" height="14" viewBox="0 0 14 14"><circle cx="7" cy="7" r="6.8" fill="#dadada"/><path d="M7 2.6 L11 6.8 H8.4 V11.4 H5.6 V6.8 H3 Z" fill="#fff"/></svg>
<svg class="a" style="left:1106.5px;top:627.0px;" width="19" height="13" viewBox="0 0 19 13"><rect x="0.7" y="0.7" width="17.6" height="11.6" rx="1" fill="none" stroke="#444" stroke-width="1.4"/>
<path d="M0.7 2 H18.3" stroke="#444" stroke-width="1.6"/>
<circle cx="5.2" cy="5.6" r="1.5" fill="#444"/><path d="M2.5 10.4 Q2.5 7.4 5.2 7.4 Q7.9 7.4 7.9 10.4Z" fill="#444"/>
<path d="M9.5 5 H16 M9.5 7.2 H16 M9.5 9.4 H16" stroke="#444" stroke-width="1.1"/></svg>
<div class="a" style="left:1183px;top:619.4px;width:94.5px;height:29.2px;background:#fff;border:1px solid #cfcfcf;border-radius:3px;box-sizing:border-box;"></div>
<div class="t " style="left:1196.40px;top:627.77px;font-size:13.5px;color:#ff6b12;font-weight:bold;transform:scaleX(0.8789);">Pending</div>
<svg class="a" style="left:1257px;top:633.6px;" width="8" height="4" viewBox="0 0 8 4"><path d="M0 0 L8 0 L4.0 4 Z" fill="#333"/></svg>
<div class="t " style="left:1325.80px;top:627.86px;font-size:13.4px;color:#262626;transform:scaleX(1.0199);">09/21/17</div>
<div class="a" style="left:1146px;top:266px;width:265px;height:155px;background:#fff;border:1px solid rgba(0,0,0,.2);border-radius:4px;box-shadow:0 6px 10px -3px rgba(0,0,0,.18);box-sizing:border-box;"></div>
<div class="t " style="left:1167.40px;top:276.86px;font-size:13.4px;color:#262626;transform:scaleX(0.9428);">Add Label</div>
<div class="t " style="left:1167.40px;top:300.86px;font-size:13.4px;color:#262626;transform:scaleX(0.9328);">Remove Label</div>
<div class="t " style="left:1167.40px;top:324.86px;font-size:13.4px;color:#262626;transform:scaleX(0.9673);">Download Applicant Packages: Zip</div>
<div class="t " style="left:1167.40px;top:348.06px;font-size:13.4px;color:#262626;transform:scaleX(0.9576);">Download Applicant Data to CSV</div>
<div class="t " style="left:1167.40px;top:372.06px;font-size:13.4px;color:#262626;transform:scaleX(0.9790);">Mark Applications as Hired</div>
<div class="t " style="left:1167.40px;top:395.56px;font-size:13.4px;color:#262626;transform:scaleX(0.9782);">Mark Applications As Declined</div>
<svg class="a" style="left:1190px;top:244px;" width="130" height="16" viewBox="0 0 130 16"><path d="M30 8.2 L127 7" stroke="#ff0090" stroke-width="3" stroke-linecap="round"/><path d="M4.3 8.5 L30.2 3 L30.2 14 Z" fill="#ff0090"/></svg>
<svg class="a" style="left:1228px;top:273px;" width="138" height="16" viewBox="0 0 138 16"><path d="M29 7.8 L135 7.3" stroke="#ff0090" stroke-width="3" stroke-linecap="round"/><path d="M4.8 8.3 L30.4 3.3 L30.4 13.8 Z" fill="#ff0090"/></svg>
<div class="t" style="left:696px;top:681.80px;font-size:13px;color:#666;transform-origin:0 0;transform:scaleX(0.9868);">Can't find an applicant you're looking for? Make sure you've <span style="color:#2a5db0">added the school</span> they belong to.</div>
<svg class="a" style="left:15px;top:48px;" width="22" height="18" viewBox="0 0 22 18"><path d="M1.3 9.7 L11 3 L20.7 9.7" fill="none" stroke="#9a9a9e" stroke-width="1.9" stroke-linejoin="miter"/>
<rect x="15.2" y="1.3" width="2.6" height="5.5" fill="#9a9a9e"/>
<path d="M4 10.3 L11 5.2 L18.2 10.3 V17 H12.7 V12.3 H9.8 V17 H4 Z" fill="#9a9a9e"/></svg>
<svg class="a" style="left:17px;top:79px;" width="18" height="20" viewBox="0 0 18 20"><circle cx="9" cy="5.4" r="4.6" fill="#9a9a9e"/>
<path d="M1 15.5 Q1 9.8 5 9.6 Q9 11.6 13 9.6 Q17 9.8 17 15.5 Q17 19.7 15 19.7 L3 19.7 Q1 19.7 1 15.5 Z" fill="#9a9a9e"/></svg>
<svg class="a" style="left:14px;top:111px;" width="24" height="21" viewBox="0 0 24 21"><path d="M6.9 4.5 V1.6 Q6.9 0.9 7.6 0.9 H16.5 Q17.2 0.9 17.2 1.6 V4.5 H15 V2.7 H9.2 V4.5 Z" fill="#9a9a9e"/>
<rect x="1" y="3.7" width="22.1" height="16.3" rx="3.2" fill="#9a9a9e"/>
<path d="M5.6 3.7 V20 M18.4 3.7 V20" stroke="#2b2b2b" stroke-width="0.9"/></svg>
<svg class="a" style="left:15px;top:175px;" width="25" height="21" viewBox="0 0 25 21"><rect x="3" y="1" width="6" height="4.2" fill="#9a9a9e"/>
<rect x="1" y="5" width="22.6" height="2" fill="#9a9a9e"/>
<rect x="1" y="5" width="2" height="14.4" fill="#9a9a9e"/>
<rect x="21.2" y="5" width="2.2" height="14.4" fill="#9a9a9e"/>
<path d="M15.6 6.5 Q16 1.6 18 1 Q20.4 1.4 20 6 L18.6 13.8 H8.5 Q7.2 13.6 7.4 11.6 Q7.8 10.3 10.6 10.4 L16.3 10.2 Z" fill="#9a9a9e"/>
<path d="M10.5 9 Q12 8.2 14 9.2" stroke="#2b2b2b" stroke-width="0.9" fill="none"/>
<path d="M13.7 13.8 V16.2 M10.7 19 Q11 16.3 13.7 16.2 Q16.4 16.3 16.7 19 M13.7 16.2 V19" stroke="#9a9a9e" stroke-width="1.1" fill="none"/></svg>
<svg class="a" style="left:16px;top:238px;" width="30" height="20" viewBox="0 0 30 20"><g fill="none" stroke="#9a9a9e" stroke-width="1.3">
<path d="M1.6 19 Q2 14.6 6 13.8 L10.2 16.8 L14.2 13.8 Q16.2 14.6 16.8 16.6"/>
<path d="M13.6 19 Q14.2 14.6 18 13.8 L22 16.8 L26 13.8 Q28 14.6 28.4 19"/>
<path d="M5.5 5 V10 Q6 13.5 9.8 14.4 Q13.8 13.5 14.2 10 V5"/>
<path d="M17.5 5 V10 Q18 13.5 21.8 14.4 Q25.8 13.5 26.2 10 V5"/>
</g>
<path d="M2.5 3.2 L10 1 L17.5 3 L15 5 H5 Z" fill="#9a9a9e"/>
<path d="M14 3.2 L21.5 1 L28.8 3 L27 5.5 H16.5 Z" fill="#9a9a9e"/>
<rect x="5.5" y="4.5" width="8.7" height="2.8" fill="#9a9a9e"/><rect x="17.4" y="4.5" width="8.8" height="2.8" fill="#9a9a9e"/></svg>
<svg class="a" style="left:20px;top:269px;" width="21" height="22" viewBox="0 0 21 22"><path d="M0.4 7.8 L10.4 1 L20 7.8 Z" fill="#9a9a9e"/>
<path d="M10.4 3.6 L14.5 6.6 H6.3 Z" fill="#2b2b2b"/><rect x="9.7" y="4.6" width="1.4" height="2.2" fill="#9a9a9e"/>
<g fill="#9a9a9e"><rect x="1.6" y="8.8" width="1.8" height="9.3"/><rect x="5" y="8.8" width="1.8" height="9.3"/><rect x="8.4" y="8.8" width="1.8" height="9.3"/><rect x="11.8" y="8.8" width="1.8" height="9.3"/><rect x="15.2" y="8.8" width="1.8" height="9.3"/>
<rect x="17.6" y="8.8" width="1.8" height="9.3"/></g>
<path d="M1 18 H19.5 L20.2 21 H0.3 Z" fill="#9a9a9e"/></svg>
<svg class="a" style="left:18px;top:301px;" width="26" height="22" viewBox="0 0 26 22"><g fill="none" stroke="#9a9a9e" stroke-width="1.3">
<path d="M1 20.8 Q1 15.5 6 14.8 L8.7 14.2 Q5.5 11.5 5.2 7 Q5.4 1.5 10.5 1.2 Q14 1 15.3 4 Q13.5 6.2 13.8 10 Q13 13 11.2 14.2 L13 14.8 Q16 15.5 16.5 19.5"/>
<path d="M15.3 4 Q16.5 1.2 19.8 1.6 Q23.5 2.4 23.4 7.8 Q23 12.5 19.6 14.2 L21 14.8 Q24.5 15.5 24.6 20.8"/>
<path d="M11.3 20.8 Q11.6 16 14.4 15"/>
</g></svg>
<svg class="a" style="left:16px;top:363px;" width="23" height="23" viewBox="0 0 23 23"><rect x="0.9" y="3.4" width="21.2" height="18.3" fill="none" stroke="#9a9a9e" stroke-width="1.7"/>
<path d="M0.9 7.6 H22.1" stroke="#9a9a9e" stroke-width="1.5"/>
<g fill="#9a9a9e"><rect x="3.6" y="0.6" width="1.7" height="4.6"/><rect x="10.7" y="0.6" width="1.7" height="4.6"/><rect x="17.8" y="0.6" width="1.7" height="4.6"/>
<rect x="6.6" y="3.4" width="2.4" height="1.6"/><rect x="14" y="3.4" width="2.4" height="1.6"/></g>
<path d="M9 12.7 Q9.4 11.9 11.3 11.9 Q13.3 11.9 13.3 13.1 Q13.3 14.2 11.6 14.4 Q13.6 14.5 13.6 15.8 Q13.6 17.2 11.3 17.2 Q9.3 17.2 8.8 16.3" fill="none" stroke="#9a9a9e" stroke-width="1.5"/></svg>
<svg class="a" style="left:12px;top:394px;" width="32" height="24" viewBox="0 0 32 24"><g fill="#9a9a9e">
<rect x="2.2" y="8" width="2.6" height="8.6"/>
<circle cx="9.25" cy="4.6" r="1.9"/>
<path d="M7.6 6.6 H10.4 L13.9 9.6 V11 L10.6 10.4 V12.4 H7.6 Z"/>
<rect x="3" y="12.2" width="7" height="4.4"/>
<rect x="5.2" y="16.4" width="1.3" height="2.8"/><rect x="8.4" y="16.4" width="1.3" height="2.8"/>
<rect x="8.6" y="10.8" width="11.8" height="2.2"/>
<rect x="11.2" y="12.8" width="1.9" height="6.4"/><rect x="17.4" y="12.8" width="1.9" height="6.4"/>
<circle cx="24.9" cy="5.5" r="1.9"/>
<rect x="23.4" y="7.3" width="3.3" height="8"/>
<rect x="20.4" y="12.6" width="6.4" height="4"/>
<rect x="26.8" y="8" width="2.5" height="8.6"/>
<rect x="21.4" y="16.4" width="1.3" height="2.8"/><rect x="24.6" y="16.4" width="1.3" height="2.8"/>
<rect x="3.2" y="19" width="24.6" height="2"/>
</g></svg>
<svg class="a" style="left:17px;top:427px;" width="21" height="22" viewBox="0 0 21 22"><g fill="none" stroke="#9a9a9e" stroke-width="1.4"><circle cx="10" cy="4.4" r="2.5"/><path d="M6.6 9.8 L8.4 7.4 M13.4 9.8 L11.6 7.4"/></g>
<g fill="#9a9a9e"><path d="M0.9 9.8 H19 L18.2 15.6 H1.7 Z"/><rect x="4.3" y="15.4" width="1.8" height="5.6"/><rect x="14.1" y="15.4" width="1.9" height="5.6"/>
<path d="M3.2 9.8 L4.2 6.2 L6 6.6 L5.2 9.8Z"/></g>
<path d="M2.4 12.4 H17.4" stroke="#6a6a6e" stroke-width="0.7"/></svg>
<svg class="a" style="left:19px;top:492px;" width="23" height="18" viewBox="0 0 23 18"><g fill="#9a9a9e"><rect x="7" y="1.6" width="14" height="2.8"/><rect x="7" y="5.6" width="12.4" height="2.8"/><rect x="7" y="9.6" width="13" height="2.8"/><rect x="7" y="13.6" width="15" height="2.8"/></g>
<g fill="none" stroke="#9a9a9e" stroke-width="1.2"><path d="M1.2 2.6 L2.8 4 L5.6 1"/><path d="M1.2 6.6 L2.8 8 L5.6 5"/><path d="M1.2 10.6 L2.8 12 L5.6 9"/></g></svg>
</body></html>
